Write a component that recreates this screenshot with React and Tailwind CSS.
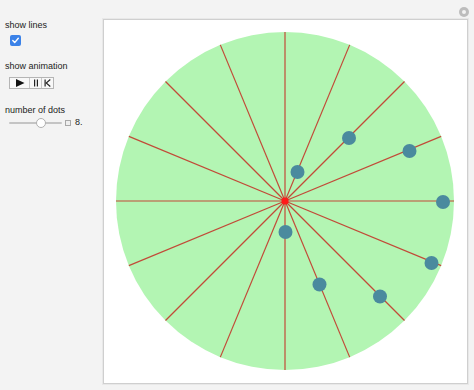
import React from 'react';

const CX = 285;
const CY = 201;
const R = 169;

// 16 rays from the centre, 22.5 degrees apart
const rays = Array.from({ length: 16 }, (_, i) => {
  const a = (i * Math.PI) / 8;
  return { x: CX + R * Math.cos(a), y: CY + R * Math.sin(a) };
});

const dots = [
  [297.5, 172],
  [349, 138],
  [409.5, 151],
  [443, 202],
  [431.5, 263],
  [380, 296.5],
  [319.5, 284.5],
  [285.5, 232],
];

function Controls() {
  return (
    <div className="w-[103px] shrink-0 pl-[5px] pt-[20px] text-[9px] leading-[11px] text-[#222]" style={{ fontFamily: '"Liberation Sans", Arial, sans-serif' }}>
      <div>show lines</div>
      <div className="mt-[4px] ml-[5px] flex h-[11px] w-[11px] items-center justify-center rounded-[2px] bg-[#3b82e8]">
        <svg width="9" height="9" viewBox="0 0 9 9">
          <path d="M1.8 4.6 L3.7 6.6 L7.3 2.2" fill="none" stroke="white" strokeWidth="1.4" strokeLinecap="round" strokeLinejoin="round" />
        </svg>
      </div>
      <div className="mt-[15px]">show animation</div>
      <div className="mt-[5px] ml-[4px] flex h-[12px] w-[45px] border border-[#b5b5b5] bg-[#f8f8f8]">
        <div className="flex w-[20px] items-center justify-center border-r border-[#c8c8c8]">
          <svg width="10" height="8" viewBox="0 0 10 8"><path d="M1 0 L9.5 4 L1 8 Z" fill="#111" /></svg>
        </div>
        <div className="flex w-[12px] items-center justify-center border-r border-[#c8c8c8]">
          <svg width="6" height="8" viewBox="0 0 6 8"><rect x="1" y="0.5" width="1.2" height="7" fill="#222" /><rect x="3.8" y="0.5" width="1.2" height="7" fill="#222" /></svg>
        </div>
        <div className="flex flex-1 items-center justify-center">
          <svg width="7" height="8" viewBox="0 0 7 8"><rect x="0.5" y="0.5" width="1.2" height="7" fill="#222" /><path d="M6.3 0.5 L2.2 4 L6.3 7.5" fill="none" stroke="#222" strokeWidth="1.1" /></svg>
        </div>
      </div>
      <div className="mt-[16px]">number of dots</div>
      <div className="mt-[1px] flex items-center">
        <div className="relative ml-[4px] h-[10px] w-[53px]">
          <div className="absolute left-0 right-0 top-[4px] h-[2px] rounded bg-[#c4c4c4]" />
          <div className="absolute left-[27px] top-0 h-[10px] w-[10px] rounded-full border border-[#b0b0b0] bg-white" />
        </div>
        <div className="ml-[3px] h-[6px] w-[6px] border border-[#a8a8a8] bg-[#eee]" />
        <div className="ml-[4px]">8.</div>
      </div>
    </div>
  );
}

function Plot() {
  return (
    <div className="mt-[19px] h-[365px] w-[365px] border border-[#cfcfcf] bg-white shadow-[0_0_0_1px_#e8e8e8]">
      <svg width="363" height="363" viewBox="104 20 363 363" className="block">
        <circle cx={CX} cy={CY} r={R} fill="#b3f5b3" />
        {rays.map((p, i) => (
          <line key={i} x1={CX} y1={CY} x2={p.x} y2={p.y} stroke="#c24a38" strokeWidth="1.2" />
        ))}
        {dots.map(([x, y], i) => (
          <circle key={i} cx={x} cy={y} r="7" fill="#4a8a9e" />
        ))}
        <circle cx={CX} cy={CY} r="3.5" fill="#ff1a1a" />
      </svg>
    </div>
  );
}

export default function App() {
  return (
    <div className="relative h-[390px] w-[474px] overflow-hidden bg-[#f3f3f3]">
      <div className="flex">
        <Controls />
        <Plot />
      </div>
      {/* corner options button */}
      <div className="absolute left-[459px] top-[7px] flex h-[10px] w-[10px] items-center justify-center rounded-full bg-[#bdbdbd]">
        <div className="h-[4px] w-[4px] rounded-full bg-[#f3f3f3]" />
      </div>
    </div>
  );
}
